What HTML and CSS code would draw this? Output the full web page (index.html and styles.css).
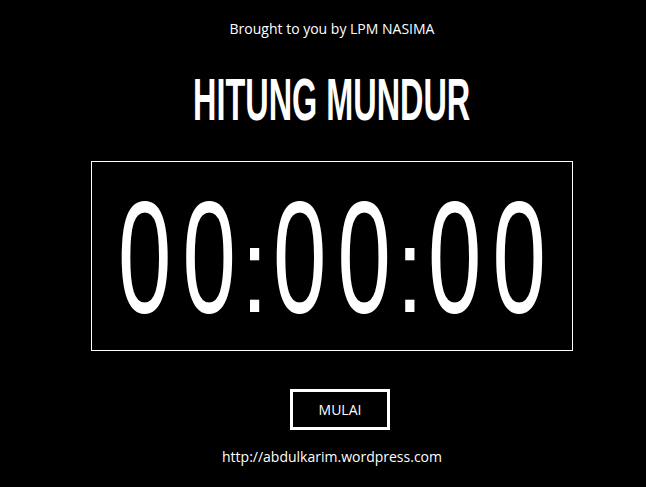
FILE: index.html
```html
<!DOCTYPE html>
<html>
<head>
    <title>Hitung Mundur</title>
    <link rel="stylesheet" href="styles.css">
</head>
<body>
    <div class="page">
        <div class="credit">Brought to you by LPM NASIMA</div>
        <h1 class="title"><span>HITUNG MUNDUR</span></h1>
        <div class="clock-box">
            <div class="clock" id="clock">
                <span class="digit">0</span><span class="digit">0</span><span class="sep">:</span><span class="digit">0</span><span class="digit">0</span><span class="sep">:</span><span class="digit">0</span><span class="digit">0</span>
            </div>
        </div>
        <div class="actions">
            <button type="button" id="startBtn" class="start-btn">MULAI</button>
        </div>
        <div class="site-link">http://abdulkarim.wordpress.com</div>
    </div>
</body>
</html>
```

FILE: styles.css
```css
body {
    margin: 0;
    padding: 0;
    background-color: #000;
    color: #fff;
    font-family: 'Open Sans', 'Liberation Sans', sans-serif;
}
.page {
    width: 482px;
    margin: 0 auto;
    padding-left: 18px;
    text-align: center;
}
.credit {
    margin-top: 20px;
    font-size: 14px;
    line-height: 18px;
}
.title {
    display: flex;
    justify-content: center;
    margin: 32px 0 0 0;
    height: 60px;
    font-family: 'Liberation Sans', Arial, sans-serif;
    font-size: 60px;
    font-weight: bold;
    line-height: 60px;
    white-space: nowrap;
}
.title span {
    flex-shrink: 0;
    transform: scaleX(0.54);
}
.clock-box {
    display: flex;
    justify-content: center;
    margin-top: 31px;
    border: 1px solid #fff;
    height: 188px;
    overflow: hidden;
}
/* digits are drawn wide, then squeezed into a tall narrow face */
.clock {
    display: flex;
    flex-shrink: 0;
    margin-top: 15px;
    font-family: 'Liberation Sans', Arial, sans-serif;
    font-size: 160px;
    line-height: 160px;
    height: 160px;
    transform: scaleX(0.6);
}
.digit {
    width: 107.5px;
    text-align: center;
}
.sep {
    width: 43.4px;
    text-align: center;
    transform-origin: 50% 135px;
    transform: scaleY(0.75);
}
.actions {
    margin-top: 38px;
}
.start-btn {
    margin-left: 16px;
    width: 100px;
    height: 41px;
    background-color: #000;
    color: #fff;
    border: 3px solid #fff;
    font-family: 'Open Sans', 'Liberation Sans', sans-serif;
    font-size: 14px;
    cursor: pointer;
}
.site-link {
    margin-top: 18px;
    font-size: 14px;
    line-height: 18px;
}
```
